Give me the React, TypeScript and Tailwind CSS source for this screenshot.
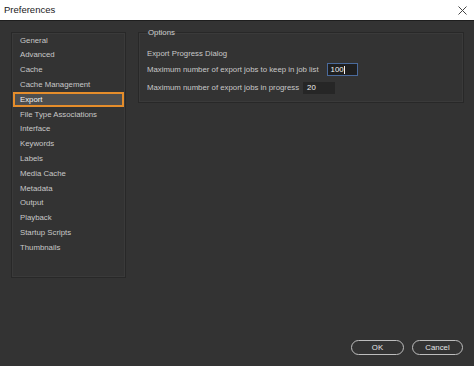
import React from "react";

const items = [
  "General",
  "Advanced",
  "Cache",
  "Cache Management",
  "Export",
  "File Type Associations",
  "Interface",
  "Keywords",
  "Labels",
  "Media Cache",
  "Metadata",
  "Output",
  "Playback",
  "Startup Scripts",
  "Thumbnails",
];

export default function App() {
  return (
    <div
      className="w-[474px] h-[366px] flex flex-col overflow-hidden"
      style={{ fontFamily: '"Liberation Sans", Arial, sans-serif' }}
    >
      <div className="h-[20px] bg-white flex items-center justify-between pl-[4px] pr-[7px]">
        <span className="text-[9.5px] text-[#1a1a1a] leading-none">Preferences</span>
        <svg width="9" height="9" viewBox="0 0 9 9" className="text-[#444]">
          <path d="M0.5 0.5 L8.5 8.5 M8.5 0.5 L0.5 8.5" stroke="currentColor" strokeWidth="1" />
        </svg>
      </div>
      <div className="flex-1 flex flex-col bg-[#333333] border-t border-[#1e1e1e]">
        <div className="flex pt-[11px] pl-[11px] pr-[10px] gap-[12px] items-start">
          <div className="w-[115px] h-[246px] border border-[#282828] shadow-[inset_0_0_0_1px_#3a3a3a] pt-0 px-[1px]">
            {items.map((it) => (
              <div
                key={it}
                className={
                  it === "Export"
                    ? "h-[15px] flex items-center pl-[5px] text-[7.8px] text-[#f0f0f0] bg-[#4e4e4e] border-2 border-[#e58d2b] leading-none"
                    : "h-[14.8px] flex items-center pl-[7px] text-[7.8px] text-[#c8c8c8] leading-none"
                }
              >
                {it}
              </div>
            ))}
          </div>
          <fieldset className="flex-1 h-[74px] border border-[#282828] shadow-[inset_0_0_0_1px_#3a3a3a] mt-[-3px] px-[8px]">
            <legend className="px-[1px] text-[7.8px] text-[#d0d0d0] leading-none">Options</legend>
            <div className="flex flex-col text-[7.8px] text-[#c8c8c8] leading-none pt-[11px]">
              <div className="h-[13px] flex items-center">Export Progress Dialog</div>
              <div className="h-[18px] flex items-center">
                <span>Maximum number of export jobs to keep in job list</span>
                <div className="ml-[8px] w-[31px] h-[13px] bg-[#1f1f1f] border border-[#4a6a9c] flex items-center pl-[3px] text-[#f2f2f2]">
                  100<span className="inline-block w-[1px] h-[8px] bg-[#f2f2f2]" />
                </div>
              </div>
              <div className="h-[18px] flex items-center">
                <span>Maximum number of export jobs in progress</span>
                <div className="ml-[4px] w-[32px] h-[12px] bg-[#262626] flex items-center pl-[4px] text-[#f2f2f2]">
                  20
                </div>
              </div>
            </div>
          </fieldset>
        </div>
        <div className="flex-1" />
        <div className="flex justify-end gap-[8px] pr-[11px] pb-[11px]">
          <button className="w-[53px] h-[15px] rounded-full border-[1.5px] border-[#bdbdbd] text-[7.8px] text-[#e6e6e6] flex items-center justify-center leading-none">
            OK
          </button>
          <button className="w-[51px] h-[15px] rounded-full border-[1.5px] border-[#bdbdbd] text-[7.8px] text-[#e6e6e6] flex items-center justify-center leading-none">
            Cancel
          </button>
        </div>
      </div>
    </div>
  );
}
